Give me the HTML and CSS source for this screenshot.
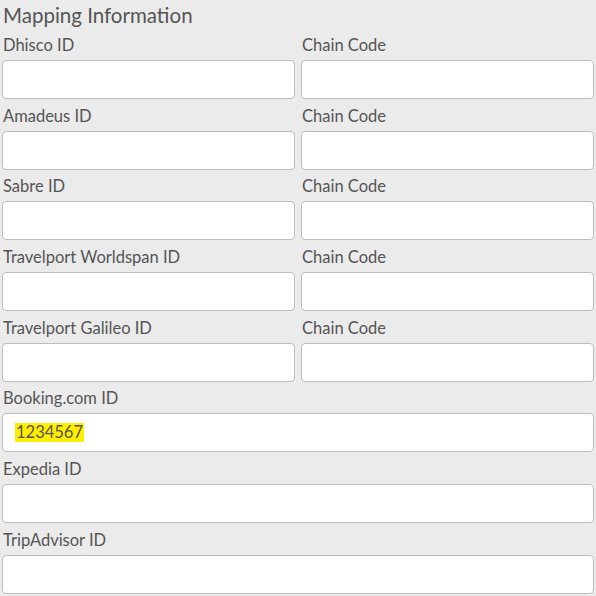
FILE: index.html
```html
<!DOCTYPE html>
<html>
<head>
<meta charset="utf-8">
<link rel="stylesheet" href="styles.css">
</head>
<body>
<div class="panel">
  <h2 class="title">Mapping Information</h2>
  <div class="row">
    <div class="field"><label class="label">Dhisco ID</label><div class="input"></div></div>
    <div class="field"><label class="label">Chain Code</label><div class="input"></div></div>
  </div>
  <div class="row">
    <div class="field"><label class="label">Amadeus ID</label><div class="input"></div></div>
    <div class="field"><label class="label">Chain Code</label><div class="input"></div></div>
  </div>
  <div class="row">
    <div class="field"><label class="label">Sabre ID</label><div class="input"></div></div>
    <div class="field"><label class="label">Chain Code</label><div class="input"></div></div>
  </div>
  <div class="row">
    <div class="field"><label class="label">Travelport Worldspan ID</label><div class="input"></div></div>
    <div class="field"><label class="label">Chain Code</label><div class="input"></div></div>
  </div>
  <div class="row">
    <div class="field"><label class="label">Travelport Galileo ID</label><div class="input"></div></div>
    <div class="field"><label class="label">Chain Code</label><div class="input"></div></div>
  </div>
  <div class="row single">
    <div class="field"><label class="label">Booking.com ID</label><div class="input"><span class="hl">1234567</span></div></div>
  </div>
  <div class="row single">
    <div class="field"><label class="label">Expedia ID</label><div class="input"></div></div>
  </div>
  <div class="row single">
    <div class="field"><label class="label">TripAdvisor ID</label><div class="input"></div></div>
  </div>
</div>
</body>
</html>
```
FILE: styles.css
```css
html, body {
  margin: 0;
  padding: 0;
  background: #ebebeb;
}
body {
  font-family: "Lato", "Open Sans", sans-serif;
  color: #555;
}
.panel {
  padding: 0 2px 0 2px;
}
.title {
  margin: 0 0 3px 1px;
  font-size: 20.5px;
  font-weight: 400;
  line-height: 30px;
  color: #555;
}
.row {
  display: grid;
  grid-template-columns: 1fr 1fr;
  column-gap: 6px;
  margin-bottom: 4.7px;
}
.row.single {
  grid-template-columns: 1fr;
}
.field {
  display: flex;
  flex-direction: column;
}
.label {
  display: block;
  font-size: 16.5px;
  line-height: 22px;
  padding-top: 1px;
  margin: 0 0 4px 1px;
  color: #555;
}
.input {
  box-sizing: border-box;
  height: 39px;
  background: #fff;
  border: 1px solid #bdbdbd;
  border-radius: 4px;
  display: flex;
  align-items: center;
  padding-left: 12px;
  font-size: 16.5px;
}
.hl {
  background: #ffee00;
  color: #555;
  padding: 0 1px;
  line-height: 19px;
}
```
